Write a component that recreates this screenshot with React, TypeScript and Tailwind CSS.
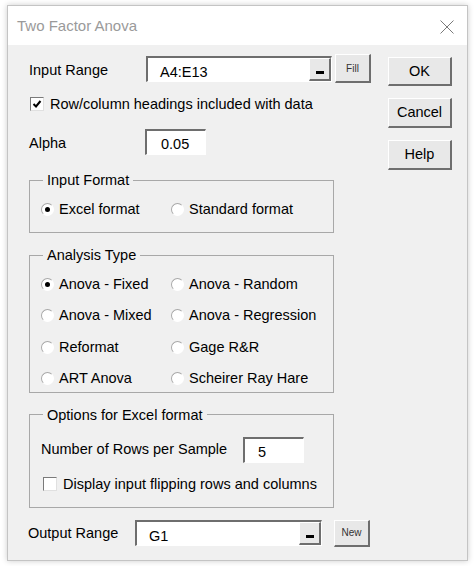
import React from 'react';

const raised =
  'bg-[#e8e8e8] border-t border-l border-t-white border-l-white border-r-2 border-b-2 border-r-[#6e6e6e] border-b-[#6e6e6e]';
const sunken =
  'bg-white border-t-2 border-l-2 border-t-[#6e6e6e] border-l-[#6e6e6e] border-r border-b border-r-white border-b-white';

const Radio = ({ checked = false }: { checked?: boolean }) => (
  <span className="w-[13px] h-[13px] shrink-0 rounded-full bg-white border border-t-[#a8a8a8] border-l-[#a8a8a8] border-r-white border-b-white flex items-center justify-center">
    {checked && <span className="w-[5px] h-[5px] rounded-full bg-black" />}
  </span>
);

const Check = ({ checked = false }: { checked?: boolean }) => (
  <span className="w-[14px] h-[14px] shrink-0 bg-white border border-t-[#7a7a7a] border-l-[#7a7a7a] border-r-[#e0e0e0] border-b-[#e0e0e0] flex items-center justify-center">
    {checked && (
      <svg width="10" height="10" viewBox="0 0 10 10">
        <path d="M1.5 5 L4 7.5 L8.5 2" fill="none" stroke="#000" strokeWidth="2" />
      </svg>
    )}
  </span>
);

const Option = ({ label, checked }: { label: string; checked?: boolean }) => (
  <div className="flex items-center h-[20px] gap-[5px]">
    <Radio checked={checked} />
    <span className="pt-[1px]">{label}</span>
  </div>
);

const Group = ({ title, children }: { title: string; children: React.ReactNode }) => (
  <fieldset className="w-[305px] border border-[#a8a8a8]">
    <legend className="ml-[13px] px-[4px] leading-[18px]">{title}</legend>
    <div className="pl-[11px]">{children}</div>
  </fieldset>
);

const RangeBox = ({ value, width }: { value: string; width: string }) => (
  <div className={`flex h-[26px] ${width} ${sunken}`}>
    <span className="flex-1 pl-[12px] pt-[2px] leading-[24px]">{value}</span>
    <div className={`w-[22px] ${raised} flex items-end justify-center pb-[5px]`}>
      <div className="w-[8px] h-[3px] bg-black" />
    </div>
  </div>
);

export default function App() {
  return (
    <div className="w-[474px] h-[566px] bg-white pt-[5px] pl-[7px] font-['Liberation_Sans',Arial,sans-serif] text-[14.5px] text-black">
      <div className="w-[461px] h-[556px] flex flex-col border border-[#c4c4c4] shadow-[0_0_6px_rgba(0,0,0,0.2)]">
        {/* title bar */}
        <div className="h-[39px] bg-white flex items-center justify-between pl-[9px] pr-[13px] pt-[2px]">
          <span className="text-[15px] text-[#9a9a9a]">Two Factor Anova</span>
          <svg width="14" height="14" viewBox="0 0 14 14">
            <path d="M0.5 0.5 L13.5 13.5 M13.5 0.5 L0.5 13.5" stroke="#7a7a7a" strokeWidth="1" />
          </svg>
        </div>

        {/* body */}
        <div className="flex-1 bg-[#f0f0f0] flex pl-[21px]">
          <div className="w-[342px] pt-[9px] flex flex-col">
            <div className="flex items-center h-[29px]">
              <span className="w-[117px] pt-[4px]">Input Range</span>
              <RangeBox value="A4:E13" width="w-[186px]" />
              <button className={`ml-[3px] w-[36px] h-[29px] ${raised} text-[10px] text-[#333]`}>Fill</button>
            </div>

            <div className="flex items-center h-[20px] mt-[11px] ml-[1px] gap-[6px]">
              <Check checked />
              <span className="pt-[1px]">Row/column headings included with data</span>
            </div>

            <div className="flex items-center h-[26px] mt-[15px]">
              <span className="w-[116px] pt-[4px]">Alpha</span>
              <div className={`w-[61px] h-[26px] ${sunken} pl-[14px] pt-[2px] leading-[22px]`}>0.05</div>
            </div>

            <div className="mt-[16px]">
              <Group title="Input Format">
                <div className="grid grid-cols-[130px_1fr] pt-[10px] pb-[13px]">
                  <Option label="Excel format" checked />
                  <Option label="Standard format" />
                </div>
              </Group>
            </div>

            <div className="mt-[13px]">
              <Group title="Analysis Type">
                <div className="grid grid-cols-[130px_1fr] gap-y-[11.5px] pt-[10px] pb-[3px]">
                  <Option label="Anova - Fixed" checked />
                  <Option label="Anova - Random" />
                  <Option label="Anova - Mixed" />
                  <Option label="Anova - Regression" />
                  <Option label="Reformat" />
                  <Option label="Gage R&R" />
                  <Option label="ART Anova" />
                  <Option label="Scheirer Ray Hare" />
                </div>
              </Group>
            </div>

            <div className="mt-[13px]">
              <Group title="Options for Excel format">
                <div className="pt-[13px] pb-[13px]">
                  <div className="flex items-center h-[26px]">
                    <span className="w-[202px]">Number of Rows per Sample</span>
                    <div className={`w-[61px] h-[26px] ${sunken} pl-[13px] pt-[1px] leading-[24px]`}>5</div>
                  </div>
                  <div className="flex items-center h-[20px] mt-[11px] ml-[2px] gap-[6px]">
                    <Check />
                    <span className="pt-[2px]">Display input flipping rows and columns</span>
                  </div>
                </div>
              </Group>
            </div>

            <div className="flex items-center h-[27px] mt-[12px] -ml-[1px]">
              <span className="w-[107px] pt-[1px]">Output Range</span>
              <RangeBox value="G1" width="w-[187px]" />
              <button className={`ml-[12px] w-[36px] h-[27px] ${raised} text-[10px] text-[#333]`}>New</button>
            </div>
          </div>

          <div className="ml-[17px] pt-[12px] flex flex-col gap-[12px]">
            <button className={`w-[64px] h-[29px] ${raised} pt-[1px]`}>OK</button>
            <button className={`w-[64px] h-[30px] ${raised} pt-[1px]`}>Cancel</button>
            <button className={`w-[64px] h-[30px] ${raised} pt-[1px]`}>Help</button>
          </div>
        </div>
      </div>
    </div>
  );
}
